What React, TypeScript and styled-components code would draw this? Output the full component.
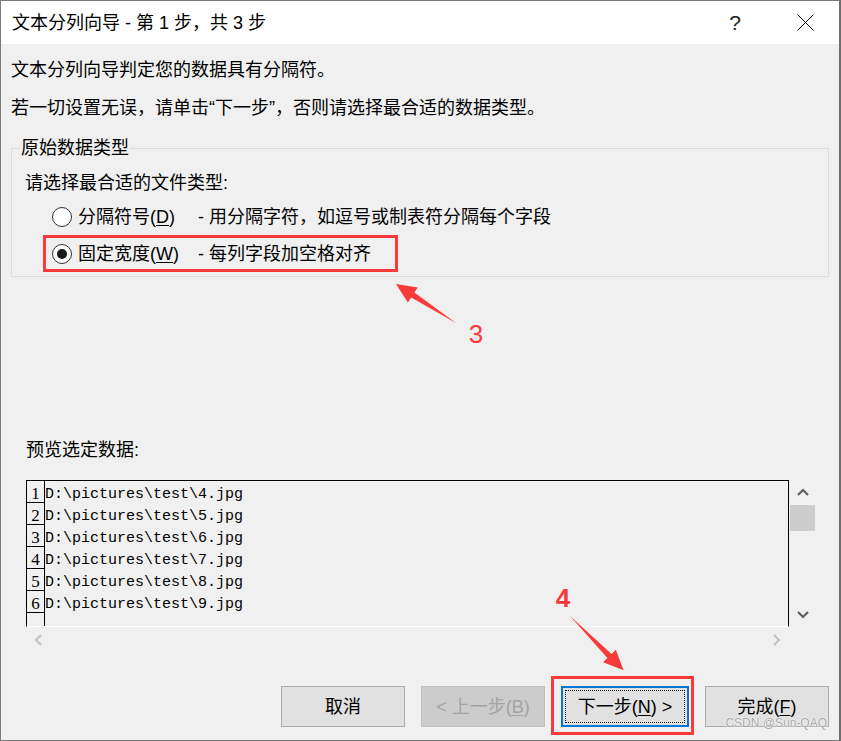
import React from "react";
import styled, { createGlobalStyle } from "styled-components";

const GlobalStyle = createGlobalStyle`
  html, body { margin: 0; padding: 0; background: #ffffff; }
  * { box-sizing: border-box; }
`;

const UI_FONT = `"Liberation Sans", "Noto Sans CJK SC", sans-serif`;
const RED = "#f73b3b";

const Window = styled.div`
  position: relative;
  width: 841px;
  height: 741px;
  border-top: 1px solid #7a7a7a;
  border-left: 1px solid #7a7a7a;
  border-right: 2px solid #6e6e6e;
  border-bottom: 1px solid #7a7a7a;
  display: flex;
  flex-direction: column;
  font-family: ${UI_FONT};
  font-size: 18px;
  color: #000;
  overflow: hidden;
`;

const TitleBar = styled.div`
  height: 43px;
  flex: none;
  background: #ffffff;
  display: flex;
  align-items: center;
  padding-left: 11px;
  padding-right: 11px;
`;

const TitleText = styled.div`
  flex: 1;
  line-height: 24px;
`;

const TitleButton = styled.div<{ $gapLeft?: number }>`
  width: 46px;
  height: 43px;
  display: flex;
  align-items: center;
  justify-content: center;
  margin-left: ${(p) => p.$gapLeft ?? 0}px;
  font-size: 21px;
  line-height: 1;
  color: #222;
`;

const Body = styled.div`
  flex: 1;
  background: #f0f0f0;
  padding: 14px 10px 0 10px;
  display: flex;
  flex-direction: column;
`;

const Line = styled.div<{ $mt?: number; $ml?: number }>`
  line-height: 24px;
  margin-top: ${(p) => p.$mt ?? 0}px;
  margin-left: ${(p) => p.$ml ?? 0}px;
  white-space: nowrap;
`;

const Group = styled.div`
  margin-top: 28px;
  border: 1px solid #dcdcdc;
  padding: 0 0 4px 13px;
`;

const Legend = styled.div`
  margin-top: -13px;
  margin-left: -5px;
  width: fit-content;
  padding: 0 1px;
  background: #f0f0f0;
  line-height: 24px;
`;

const OptionRow = styled.div<{ $highlight?: boolean; $mt?: number }>`
  display: flex;
  align-items: center;
  width: fit-content;
  height: 37px;
  margin-top: ${(p) => p.$mt ?? 0}px;
  margin-left: 18px;
  padding: 0 24px 0 6px;
  border: 3px solid ${(p) => (p.$highlight ? RED : "transparent")};
  line-height: 24px;
  white-space: nowrap;
`;

const Radio = styled.span<{ $checked?: boolean }>`
  width: 20px;
  height: 20px;
  border-radius: 50%;
  border: 1px solid #333;
  background: #fff;
  display: flex;
  align-items: center;
  justify-content: center;
  flex: none;
  &::after {
    content: "";
    display: ${(p) => (p.$checked ? "block" : "none")};
    width: 10px;
    height: 10px;
    border-radius: 50%;
    background: #1a1a1a;
  }
`;

const OptionLabel = styled.span`
  width: 120px;
  margin-left: 6px;
`;

const Mn = styled.u`
  text-decoration: underline;
  text-underline-offset: 2px;
  text-decoration-thickness: 1px;
`;

const PreviewFrame = styled.div`
  margin-top: 18px;
  margin-left: 15px;
  display: grid;
  grid-template-columns: 763px 27px;
  grid-template-rows: 147px 25px;
`;

const List = styled.div`
  border-top: 1px solid #000;
  border-left: 1px solid #000;
  border-right: 1px solid #000;
  border-bottom: 1px solid #fff;
  display: flex;
  overflow: hidden;
`;

const NumberColumn = styled.div`
  width: 18px;
  border-right: 1px solid #000;
  flex: none;
`;

const NumberCell = styled.div`
  height: 22px;
  border-bottom: 1px solid #000;
  display: flex;
  align-items: flex-end;
  justify-content: center;
  font-family: "Liberation Serif", serif;
  font-size: 17px;
  line-height: 16px;
`;

const TextColumn = styled.div`
  padding-top: 3px;
  font-family: "Liberation Mono", monospace;
  font-size: 15px;
  line-height: 22px;
  white-space: pre;
`;

const VScroll = styled.div`
  display: flex;
  flex-direction: column;
  grid-row: 1;
  grid-column: 2;
`;

const ArrowBox = styled.div<{ $w?: number; $h?: number }>`
  width: ${(p) => (p.$w ? `${p.$w}px` : "100%")};
  height: ${(p) => (p.$h ? `${p.$h}px` : "100%")};
  display: flex;
  align-items: center;
  justify-content: center;
  flex: none;
`;

const Thumb = styled.div`
  height: 26px;
  margin: 0 1px;
  background: #cdcdcd;
`;

const Spacer = styled.div`
  flex: 1;
`;

const HScroll = styled.div`
  grid-row: 2;
  grid-column: 1;
  display: flex;
  justify-content: space-between;
`;

const ButtonRow = styled.div`
  margin-top: 34px;
  display: flex;
  justify-content: flex-end;
  gap: 16px;
`;

const Button = styled.div<{ $variant?: "normal" | "disabled" | "default"; $w?: number }>`
  position: relative;
  width: ${(p) => p.$w ?? 124}px;
  height: 41px;
  display: flex;
  align-items: center;
  justify-content: center;
  line-height: 24px;
  white-space: nowrap;
  background: ${(p) => (p.$variant === "disabled" ? "#cccccc" : "#e1e1e1")};
  border: ${(p) =>
    p.$variant === "default"
      ? "2px solid #0078d7"
      : p.$variant === "disabled"
      ? "1px solid #bfbfbf"
      : "1px solid #adadad"};
  color: ${(p) => (p.$variant === "disabled" ? "#a3a3a3" : "#000")};
  ${(p) =>
    p.$variant === "default"
      ? `outline: 1px dotted #000; outline-offset: -5px;`
      : ""}
`;

const AnnotationBox = styled.div`
  position: absolute;
  left: -12px;
  right: -7px;
  top: -12px;
  bottom: -10px;
  border: 3px solid ${RED};
  pointer-events: none;
`;

const Overlay = styled.svg`
  position: absolute;
  left: 0;
  top: 0;
  width: 841px;
  height: 741px;
  pointer-events: none;
`;

const Watermark = styled.div`
  position: absolute;
  right: 12px;
  bottom: 11px;
  font-family: "Liberation Sans", sans-serif;
  font-size: 12px;
  line-height: 12px;
  color: #a8a8a8;
  text-shadow: 0 0 2px #fff, 0 0 1px #fff;
`;

const Chevron: React.FC<{ dir: "up" | "down" | "left" | "right"; color: string }> = ({ dir, color }) => {
  const pts: Record<string, string> = {
    up: "1,7 6,2 11,7",
    down: "1,2 6,7 11,2",
    left: "7,1 2,6 7,11",
    right: "2,1 7,6 2,11",
  };
  const vertical = dir === "up" || dir === "down";
  return (
    <svg width={vertical ? 12 : 9} height={vertical ? 9 : 12} viewBox={vertical ? "0 0 12 9" : "0 0 9 12"}>
      <polyline points={pts[dir]} fill="none" stroke={color} strokeWidth={2.2} />
    </svg>
  );
};

const rows = ["4", "5", "6", "7", "8", "9"];

export default function App() {
  return (
    <>
      <GlobalStyle />
      <Window>
        <TitleBar>
          <TitleText>文本分列向导 - 第 1 步，共 3 步</TitleText>
          <TitleButton>?</TitleButton>
          <TitleButton $gapLeft={24}>
            <svg width="17" height="17" viewBox="0 0 17 17">
              <path d="M0.5 0.5 L16.5 16.5 M16.5 0.5 L0.5 16.5" stroke="#000" strokeWidth="1" />
            </svg>
          </TitleButton>
        </TitleBar>
        <Body>
          <Line>文本分列向导判定您的数据具有分隔符。</Line>
          <Line $mt={14}>若一切设置无误，请单击“下一步”，否则请选择最合适的数据类型。</Line>
          <Group>
            <Legend>原始数据类型</Legend>
            <Line $mt={11}>请选择最合适的文件类型:</Line>
            <OptionRow $mt={3}>
              <Radio />
              <OptionLabel>
                分隔符号(<Mn>D</Mn>)
              </OptionLabel>
              <span>- 用分隔字符，如逗号或制表符分隔每个字段</span>
            </OptionRow>
            <OptionRow $highlight>
              <Radio $checked />
              <OptionLabel>
                固定宽度(<Mn>W</Mn>)
              </OptionLabel>
              <span>- 每列字段加空格对齐</span>
            </OptionRow>
          </Group>
          <Line $mt={161} $ml={15}>
            预览选定数据:
          </Line>
          <PreviewFrame>
            <List>
              <NumberColumn>
                {rows.map((_, i) => (
                  <NumberCell key={i}>{i + 1}</NumberCell>
                ))}
              </NumberColumn>
              <TextColumn>
                {rows.map((n) => (
                  <div key={n}>{`D:\\pictures\\test\\${n}.jpg`}</div>
                ))}
              </TextColumn>
            </List>
            <VScroll>
              <ArrowBox $h={25}>
                <Chevron dir="up" color="#606060" />
              </ArrowBox>
              <Thumb />
              <Spacer />
              <ArrowBox $h={25}>
                <Chevron dir="down" color="#606060" />
              </ArrowBox>
            </VScroll>
            <HScroll>
              <ArrowBox $w={24}>
                <Chevron dir="left" color="#c2c2c2" />
              </ArrowBox>
              <ArrowBox $w={25}>
                <Chevron dir="right" color="#c2c2c2" />
              </ArrowBox>
            </HScroll>
          </PreviewFrame>
          <ButtonRow>
            <Button>取消</Button>
            <Button $variant="disabled">
              &lt; 上一步(<Mn>B</Mn>)
            </Button>
            <Button $variant="default" $w={128}>
              下一步(<Mn>N</Mn>) &gt;
              <AnnotationBox />
            </Button>
            <Button>
              完成(<Mn>F</Mn>)
            </Button>
          </ButtonRow>
        </Body>
        <Overlay viewBox="0 0 841 741">
          <polygon
            points="455,322 413.4,291.4 416.7,286.4 395,283 406.9,301.4 410.2,296.4"
            fill={RED}
          />
          <text x="475" y="342" textAnchor="middle" fontSize="26" fill={RED} fontFamily="Liberation Sans, sans-serif">
            3
          </text>
          <polygon
            points="569,615 606.4,657.1 602.1,661.3 622.5,669.3 614.9,648.7 610.6,652.9"
            fill={RED}
          />
          <text x="562" y="606" textAnchor="middle" fontSize="26" fontWeight="600" fill={RED} fontFamily="Liberation Sans, sans-serif">
            4
          </text>
        </Overlay>
        <Watermark>CSDN @Sun-QAQ</Watermark>
      </Window>
    </>
  );
}
